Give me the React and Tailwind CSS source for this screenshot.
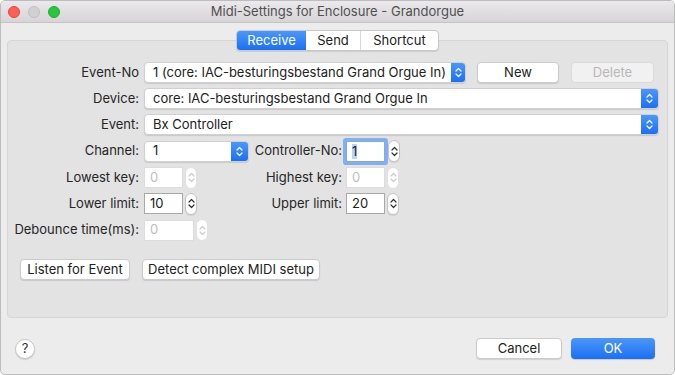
import React from 'react';

const font = { fontFamily: 'Inter, "Liberation Sans", sans-serif' };

const Chevrons = ({ color = '#fff', disabled }) => (
    <svg width="7" height="11" viewBox="0 0 7 11" fill="none">
        <path d="M1 4 L3.5 1.5 L6 4" stroke={color} strokeWidth="1.2" strokeLinecap="round" strokeLinejoin="round" opacity={disabled ? 0.5 : 1} />
        <path d="M1 7 L3.5 9.5 L6 7" stroke={color} strokeWidth="1.2" strokeLinecap="round" strokeLinejoin="round" opacity={disabled ? 0.5 : 1} />
    </svg>
);

const PopUp = ({ value, className, arrow = 'w-[17px]' }) => (
    <div className={`flex h-[21px] items-center bg-white rounded-[4px] border border-[#d0d0d0] shadow-[0_1px_1px_rgba(0,0,0,0.12)] overflow-hidden ${className}`}>
        <span className="pl-[8px] text-[13px] text-[#222] whitespace-nowrap overflow-hidden flex-1">{value}</span>
        <div className={`h-full ${arrow} flex items-center justify-center bg-gradient-to-b from-[#4b97f8] to-[#1a6ff3]`}>
            <Chevrons />
        </div>
    </div>
);

const Stepper = ({ disabled }) => (
    <div
        className={`ml-[2px] w-[12px] h-[22px] rounded-[6px] bg-white flex items-center justify-center border ${
            disabled ? 'border-[#e0e0e0] bg-[#f4f4f4]' : 'border-[#c4c4c4] shadow-[0_1px_1px_rgba(0,0,0,0.1)]'
        }`}
    >
        <Chevrons color={disabled ? '#9a9a9a' : '#333'} disabled={disabled} />
    </div>
);

const NumField = ({ value, disabled, width = 'w-[39px]' }) => (
    <div className="flex items-center">
        <div
            className={`${width} h-[21px] bg-white border flex items-center pl-[5px] text-[13px] ${
                disabled ? 'border-[#dcdcdc] text-[#bdbdbd]' : 'border-[#a9a9a9] text-[#222]'
            }`}
        >
            {value}
        </div>
        <Stepper disabled={disabled} />
    </div>
);

const Button = ({ children, className = '', disabled }) => (
    <div
        className={`h-[21px] flex items-center justify-center rounded-[4px] border text-[13px] ${
            disabled
                ? 'bg-[#f1f1f1] border-[#dadada] text-[#b8b8b8]'
                : 'bg-white border-[#cbcbcb] text-[#222] shadow-[0_1px_1px_rgba(0,0,0,0.12)]'
        } ${className}`}
    >
        {children}
    </div>
);

const Label = ({ children, className = 'w-[136px] pr-[5px]' }) => (
    <div className={`text-right text-[13px] text-[#262626] whitespace-nowrap ${className}`}>{children}</div>
);

const RightLabel = ({ children }) => <Label className="w-[97px] pr-[4px]">{children}</Label>;

export default function App() {
    return (
        <div style={font} className="w-[675px] h-[375px] bg-[#ececec] flex flex-col rounded-[5px] border border-[#bdbdbd] overflow-hidden">
            {/* Title bar */}
            <div className="relative h-[22px] shrink-0 bg-gradient-to-b from-[#ebe9eb] to-[#d6d4d6] border-b border-[#c4c4c4] flex items-center justify-center">
                <div className="absolute left-[7px] top-[5px] flex gap-[8px]">
                    <div className="w-[12px] h-[12px] rounded-full bg-[#fd5f57] border border-[#e0453f]" />
                    <div className="w-[12px] h-[12px] rounded-full bg-[#d1d1d1] border border-[#bfbfbf]" />
                    <div className="w-[12px] h-[12px] rounded-full bg-[#2ac640] border border-[#1eac2c]" />
                </div>
                <span className="text-[13px] text-[#505050]">Midi-Settings for Enclosure - Grandorgue</span>
            </div>

            <div className="px-[6px]">
                {/* Tabs */}
                <div className="relative z-10 mt-[7px] flex justify-center">
                    <div className="flex h-[21px] rounded-[4px] border border-[#c8c8c8] bg-white shadow-[0_1px_1px_rgba(0,0,0,0.1)] overflow-hidden text-[13px]">
                        <div className="w-[69px] flex items-center justify-center text-white bg-gradient-to-b from-[#4b97f8] to-[#1a6ff3]">Receive</div>
                        <div className="w-[55px] flex items-center justify-center text-[#222] border-r border-[#d8d8d8]">Send</div>
                        <div className="w-[77px] flex items-center justify-center text-[#222]">Shortcut</div>
                    </div>
                </div>

                {/* Group box */}
                <div className="-mt-[11px] h-[278px] bg-[#e3e3e3] border border-[#d6d6d6] rounded-[4px] pt-[21px] pr-[8px] flex flex-col">
                    <div className="flex flex-col gap-[5px]">
                        <div className="flex items-center h-[21px]">
                            <Label>Event-No</Label>
                            <PopUp value="1 (core: IAC-besturingsbestand Grand Orgue In)" className="w-[322px]" arrow="w-[14px]" />
                            <Button className="ml-[11px] w-[82px]">New</Button>
                            <Button disabled className="ml-[12px] w-[83px]">Delete</Button>
                        </div>
                        <div className="flex items-center h-[21px]">
                            <Label>Device:</Label>
                            <PopUp value="core: IAC-besturingsbestand Grand Orgue In" className="flex-1" />
                        </div>
                        <div className="flex items-center h-[21px]">
                            <Label>Event:</Label>
                            <PopUp value="Bx Controller" className="flex-1" />
                        </div>
                        <div className="flex items-center h-[22px]">
                            <Label>Channel:</Label>
                            <PopUp value="1" className="w-[105px]" />
                            <RightLabel>Controller-No:</RightLabel>
                            <div className="flex items-center">
                                <div className="w-[39px] h-[21px] bg-white border border-[#7fa7ea] ring-[3px] ring-[#83aef0] rounded-[1px] flex items-center pl-[5px] text-[13px] text-[#222]">
                                    <span className="bg-[#b4d5fe] leading-[15px]">1</span>
                                </div>
                                <div className="ml-[1px]">
                                    <Stepper />
                                </div>
                            </div>
                        </div>
                        <div className="flex items-center h-[21px]">
                            <Label>Lowest key:</Label>
                            <div className="w-[105px]">
                                <NumField value="0" disabled />
                            </div>
                            <RightLabel>Highest key:</RightLabel>
                            <NumField value="0" disabled />
                        </div>
                        <div className="flex items-center h-[21px]">
                            <Label>Lower limit:</Label>
                            <div className="w-[105px]">
                                <NumField value="10" />
                            </div>
                            <RightLabel>Upper limit:</RightLabel>
                            <NumField value="20" />
                        </div>
                        <div className="flex items-center h-[22px]">
                            <Label>Debounce time(ms):</Label>
                            <NumField value="0" disabled width="w-[50px]" />
                        </div>
                    </div>

                    <div className="mt-[18px] ml-[12px] flex gap-[12px]">
                        <Button className="w-[110px]">Listen for Event</Button>
                        <Button className="w-[178px]">Detect complex MIDI setup</Button>
                    </div>
                </div>
            </div>

            {/* Footer */}
            <div className="mt-[20px] px-[14px] flex items-center">
                <div className="w-[20px] h-[20px] rounded-full bg-white border border-[#c8c8c8] shadow-[0_1px_1px_rgba(0,0,0,0.15)] flex items-center justify-center text-[13px] text-[#333]">?</div>
                <div className="ml-auto flex gap-[9px] pr-[5px]">
                    <Button className="w-[86px]">Cancel</Button>
                    <div className="w-[84px] h-[21px] rounded-[4px] flex items-center justify-center text-[13px] text-white bg-gradient-to-b from-[#4b97f8] to-[#1a6ff3] shadow-[0_1px_1px_rgba(0,0,0,0.15)]">OK</div>
                </div>
            </div>
        </div>
    );
}
